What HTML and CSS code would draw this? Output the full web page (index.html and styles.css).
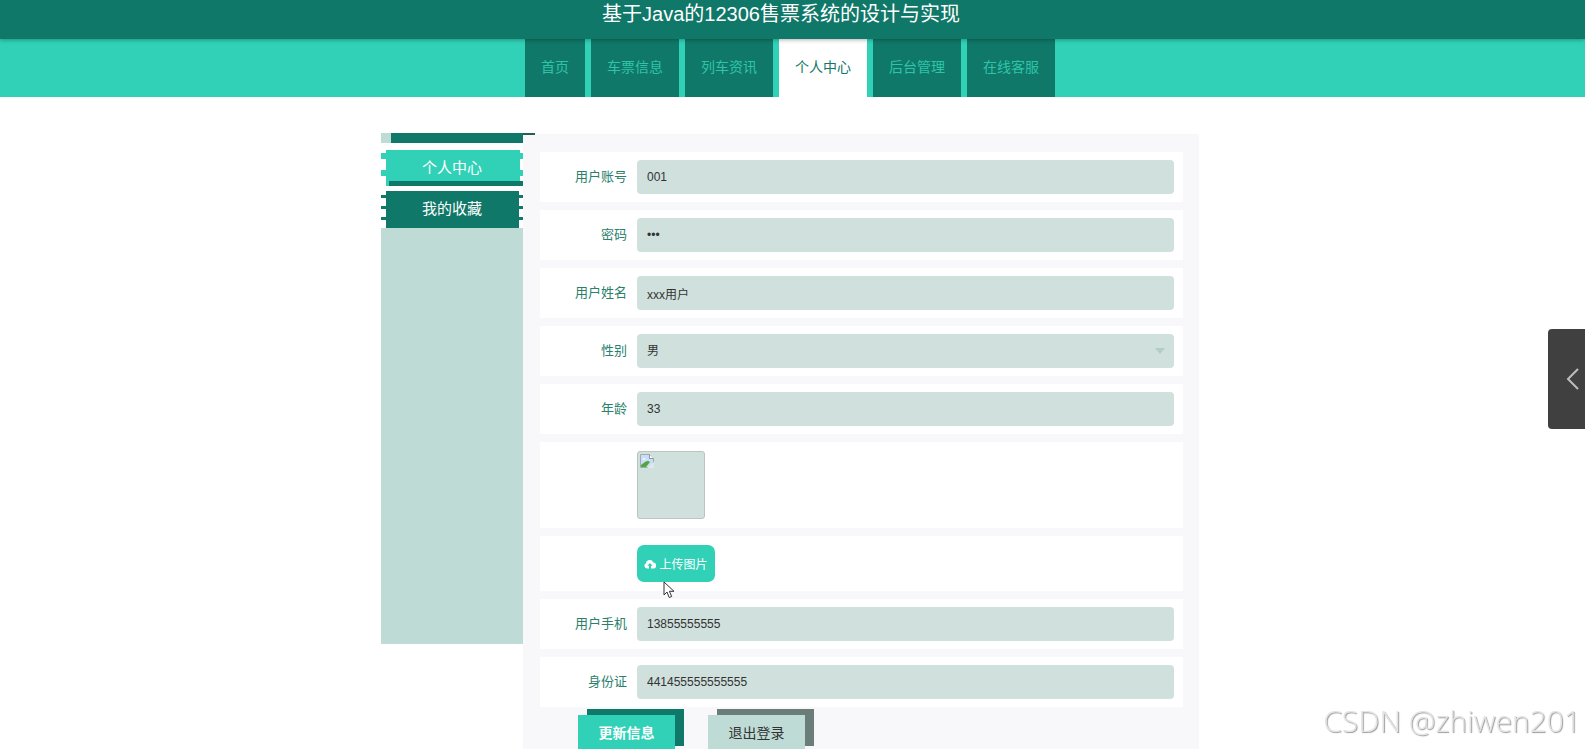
FILE: index.html
```html
<!DOCTYPE html>
<html lang="zh-CN">
<head>
<meta charset="utf-8">
<title>基于Java的12306售票系统的设计与实现</title>
<link rel="stylesheet" href="styles.css">
</head>
<body>
<header class="header"><h1 class="title">基于Java的12306售票系统的设计与实现</h1></header>
<nav class="nav">
  <a class="nav-link" href="#">首页</a>
  <a class="nav-link" href="#">车票信息</a>
  <a class="nav-link" href="#">列车资讯</a>
  <a class="nav-link active" href="#">个人中心</a>
  <a class="nav-link" href="#">后台管理</a>
  <a class="nav-link" href="#">在线客服</a>
</nav>
<main class="main">
  <aside class="side">
    <div class="side-head"></div>
    <a class="side-link current" href="#">个人中心</a>
    <a class="side-link" href="#">我的收藏</a>
    <div class="side-fill"></div>
  </aside>
  <form class="panel">
    <div class="row"><label class="label" for="account">用户账号</label><input class="field" id="account" type="text" value="001"></div>
    <div class="row"><label class="label" for="password">密码</label><input class="field" id="password" type="password" value="001"></div>
    <div class="row"><label class="label" for="name">用户姓名</label><input class="field" id="name" type="text" value="xxx用户"></div>
    <div class="row"><label class="label" for="sex">性别</label>
      <div class="select-box">
        <select class="field" id="sex"><option>男</option><option>女</option></select>
        <svg class="caret" width="10" height="6" viewBox="0 0 10 6"><path d="M0 0h10L5 6z" fill="#b3ccc8"/></svg>
      </div>
    </div>
    <div class="row"><label class="label" for="age">年龄</label><input class="field" id="age" type="text" value="33"></div>
    <div class="row media">
      <div class="photo">
        <svg width="16" height="16" viewBox="0 0 16 16"><path d="M1.5 1.5h9l4 4v9h-13z" fill="#c9dcfa" stroke="#a3aab2"/><path d="M10.5 1.5v4h4" fill="#fff" stroke="#8d949c"/><path d="M3 6.500q2-3 4 0z" fill="#fff"/><path d="M2 14v-2l4-3q3-2 5 0l-4 5z" fill="#4fa83d"/><path d="M8 15l7-6v6z" fill="#dcebe8"/></svg>
      </div>
    </div>
    <div class="row media">
      <button class="upload" type="button">
        <svg width="12" height="10" viewBox="0 0 12 10"><path d="M3 9.500A2.800 2.800 0 0 1 2 4.200A3.800 3.800 0 0 1 9.300 3.500A3 3 0 0 1 9.200 9.500H7V6.800h1.700L6 3.900 3.300 6.800H5v2.700z" fill="#fff"/></svg>上传图片
      </button>
      <svg class="pointer" width="12" height="18" viewBox="0 0 12 18"><path d="M1 1v13l3-3 2.200 5.500 2.500-1-2.300-5.200H11z" fill="#fff" stroke="#333"/></svg>
    </div>
    <div class="row"><label class="label" for="phone">用户手机</label><input class="field" id="phone" type="text" value="13855555555"></div>
    <div class="row"><label class="label" for="idcard">身份证</label><input class="field" id="idcard" type="text" value="441455555555555"></div>
    <div class="actions">
      <button class="action save" type="button">更新信息</button>
      <button class="action logout" type="button">退出登录</button>
    </div>
  </form>
</main>
<button class="drawer" type="button" aria-label="展开">
  <svg width="14" height="22" viewBox="0 0 14 22"><path d="M12 1L2 11l10 10" fill="none" stroke="#bdbdbd" stroke-width="2"/></svg>
</button>
<div class="watermark">CSDN @zhiwen201</div>
</body>
</html>
```
FILE: styles.css
```css
* { box-sizing: border-box; }

body {
  margin: 0;
  height: 100vh;
  overflow: hidden;
  background: #fff;
  font-family: "Liberation Sans", "Noto Sans CJK SC", sans-serif;
  font-size: 12px;
  color: #333;
}

a { text-decoration: none; }
button, input, select { font-family: inherit; border: 0; }

.header {
  position: relative;
  height: 39px;
  padding-right: 23px;
  background: #107868;
  box-shadow: 0 1px 4px rgba(0, 0, 0, 0.3);
}

.title {
  margin: 0;
  font-size: 20px;
  line-height: 28px;
  font-weight: 400;
  text-align: center;
  color: #fff;
}

.nav {
  display: flex;
  justify-content: center;
  gap: 6px;
  height: 58px;
  padding-right: 5px;
  background: #30d1b7;
}

.nav-link {
  padding: 0 16px;
  background: #107868;
  color: #2fc4aa;
  font-size: 14px;
  line-height: 56px;
}

.nav-link.active {
  background: #fff;
  color: #107868;
}

.main {
  display: flex;
  justify-content: center;
  align-items: flex-start;
  padding: 36px 5px 0 0;
}

.side {
  display: flex;
  flex-direction: column;
  width: 142px;
}

.side-head {
  position: relative;
  height: 10px;
  margin-bottom: 7px;
  background: #107868;
  border-left: 10px solid #bfdbd6;
}

.side-head::after {
  content: "";
  position: absolute;
  left: 100%;
  top: 0;
  width: 12px;
  height: 2px;
  background: #245e56;
}

.side-link {
  height: 37px;
  background:
    linear-gradient(#107868, #107868) 5px 0 / 133px 100% no-repeat,
    repeating-linear-gradient(#fff 0 4px, #107868 4px 7px, #fff 7px 11px);
  color: #fff;
  font-size: 15px;
  line-height: 36px;
  text-align: center;
}

.side-link.current {
  height: 36px;
  margin-bottom: 5px;
  background:
    linear-gradient(#107868, #107868) 100% 100% / 134px 5px no-repeat,
    linear-gradient(#30d1b7, #30d1b7) 5px 0 / 134px 100% no-repeat,
    repeating-linear-gradient(#fff 0 3px, #30d1b7 3px 9px, #fff 9px 17px);
}

.side-fill {
  height: 416px;
  background: #bfdbd6;
}

.panel {
  display: flex;
  flex-direction: column;
  gap: 8px;
  width: 676px;
  margin-top: 1px;
  padding: 18px 16px 18px 17px;
  background: #f8f8fb;
}

.row {
  display: flex;
  align-items: center;
  gap: 10px;
  padding: 8px 9px;
  background: #fff;
}

.label {
  width: 78px;
  padding-bottom: 4px;
  text-align: right;
  font-size: 13px;
  color: #2a806b;
}

.field {
  flex: 1;
  width: 100%;
  height: 34px;
  padding: 0 10px;
  border-radius: 4px;
  background: #cfe0dd;
  color: #333;
  font-size: 12px;
  appearance: none;
}

.select-box {
  position: relative;
  display: flex;
  flex: 1;
}

.caret {
  position: absolute;
  right: 9px;
  top: 14px;
}

.media {
  position: relative;
  padding: 9px 9px 9px 97px;
}

.photo {
  width: 68px;
  height: 68px;
  padding: 1px;
  border: 1px solid #bcc4c2;
  border-radius: 3px;
  background: #cfe0dd;
}

.upload {
  display: flex;
  align-items: center;
  justify-content: center;
  gap: 3px;
  width: 78px;
  height: 37px;
  padding: 0;
  border-radius: 7px;
  background: #30d1b7;
  color: #fff;
  font-size: 12px;
}

.pointer {
  position: absolute;
  left: 123px;
  top: 45px;
}

.actions {
  display: flex;
  gap: 33px;
  padding-left: 38px;
}

.action {
  width: 97px;
  height: 37px;
  padding: 0 0 4px;
  font-size: 14px;
}

.save {
  background: #30d1b7;
  box-shadow: 9px -6px 0 #107868;
  color: #fff;
  font-weight: 700;
}

.logout {
  background: #bfdbd6;
  box-shadow: 9px -6px 0 #6b7d79;
  color: #333;
}

.drawer {
  position: fixed;
  right: 0;
  top: calc(50% - 46px);
  width: 37px;
  height: 100px;
  padding: 0 5px 0 0;
  border-radius: 4px 0 0 4px;
  background: #404040;
  display: flex;
  align-items: center;
  justify-content: flex-end;
}

.watermark {
  position: fixed;
  right: 4px;
  bottom: 8px;
  font-family: "Open Sans", sans-serif;
  font-size: 30px;
  font-weight: 300;
  line-height: 40px;
  color: #e4e4e4;
  text-shadow: 1px 1px 1px #999;
}
```
